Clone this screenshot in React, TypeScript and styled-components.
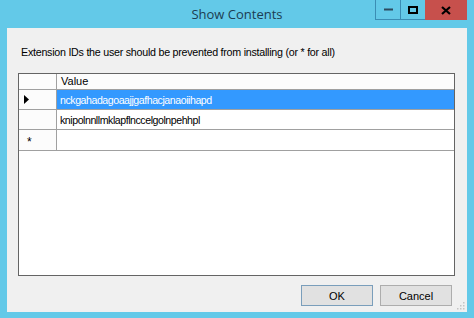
import styled, { createGlobalStyle } from "styled-components";

const GlobalStyle = createGlobalStyle`
    html, body {
        margin: 0;
        padding: 0;
        background: #63c9e8;
    }
`

const rows = [
    { id: 1, text: 'nckgahadagoaajjgafhacjanaoiihapd', current: true },
    { id: 2, text: 'knipolnnllmklapflnccelgolnpehhpl', current: false }
]

const App = () => {
    return (
        <>
            <GlobalStyle />
            <Window>
                <TitleBar>
                    <span />
                    <Title>Show Contents</Title>
                    <Controls>
                        <CtrlButton>
                            <svg width="9" height="3" viewBox="0 0 9 3"><rect width="9" height="2" y="0.5" fill="#2d4a5e" /></svg>
                        </CtrlButton>
                        <CtrlButton>
                            <svg width="10" height="8" viewBox="0 0 10 8"><rect x="1" y="1" width="8" height="6" fill="none" stroke="#000" strokeWidth="2" /></svg>
                        </CtrlButton>
                        <CloseButton>
                            <svg width="10" height="9" viewBox="0 0 10 9"><path d="M1 1 L9 8 M9 1 L1 8" stroke="#000" strokeWidth="2.2" /></svg>
                        </CloseButton>
                    </Controls>
                </TitleBar>
                <Client>
                    <Label>Extension IDs the user should be prevented from installing (or * for all)</Label>
                    <Table>
                        <HeaderCell />
                        <HeaderCell $value>Value</HeaderCell>
                        {rows.map((row) => (
                            <Row key={row.id}>
                                <RowHeader>
                                    {row.current && (
                                        <svg width="5" height="9" viewBox="0 0 5 9"><path d="M0 0 L5 4.5 L0 9 Z" fill="#000" /></svg>
                                    )}
                                </RowHeader>
                                <Cell $selected={row.current}>{row.text}</Cell>
                            </Row>
                        ))}
                        <Row>
                            <RowHeader>
                                <Star>*</Star>
                            </RowHeader>
                            <Cell />
                        </Row>
                        <Empty />
                    </Table>
                    <Footer>
                        <DialogButton $default>OK</DialogButton>
                        <DialogButton>Cancel</DialogButton>
                    </Footer>
                    <Grip>
                        <svg width="8" height="8" viewBox="0 0 8 8">
                            {[[6, 0], [6, 3], [3, 3], [6, 6], [3, 6], [0, 6]].map(([x, y], i) => (
                                <rect key={i} x={x} y={y} width="1.5" height="1.5" fill="#c4c4c4" />
                            ))}
                        </svg>
                    </Grip>
                </Client>
            </Window>
        </>
    )
}

export default App;

const Window = styled.div`
    width: 474px;
    height: 318px;
    background: #63c9e8;
    display: flex;
    flex-direction: column;
    box-sizing: border-box;
    padding: 0 7px 6px 7px;
`

const TitleBar = styled.div`
    height: 28px;
    flex: none;
    display: grid;
    grid-template-columns: 1fr auto 1fr;
    align-items: start;
`

const Title = styled.div`
    font-family: "Open Sans", "Noto Sans", sans-serif;
    font-size: 13px;
    color: #1c3d52;
    line-height: 28px;
`

const Controls = styled.div`
    justify-self: end;
    display: flex;
    height: 20px;
`

const CtrlButton = styled.div`
    width: 25px;
    height: 20px;
    box-sizing: border-box;
    border: 1px solid #3b8db4;
    border-top: 0;
    border-right: 0;
    display: flex;
    align-items: center;
    justify-content: center;
`

const CloseButton = styled.div`
    width: 42px;
    height: 20px;
    background: #c7504c;
    display: flex;
    align-items: center;
    justify-content: center;
`

const Client = styled.div`
    flex: 1;
    background: #f0f0f0;
    display: flex;
    flex-direction: column;
    padding: 18px 12px 0 11px;
    position: relative;
`

const Label = styled.div`
    font-family: "Liberation Sans", Arial, sans-serif;
    font-size: 10.7px;
    line-height: 13px;
    color: #000;
    padding-left: 3px;
    letter-spacing: -0.25px;
`

const Table = styled.div`
    margin-top: 14px;
    height: 203px;
    box-sizing: border-box;
    border: 1px solid #646464;
    background: #fff;
    display: grid;
    grid-template-columns: 38px 1fr;
    grid-template-rows: 16px 20px 20px 21px 1fr;
    font-family: "Liberation Sans", Arial, sans-serif;
    font-size: 11px;
    color: #000;
`

const HeaderCell = styled.div<{ $value?: boolean }>`
    background: #fcfcfc;
    border-bottom: 1px solid #a0a0a0;
    border-right: ${(p) => (p.$value ? "0" : "1px solid #a0a0a0")};
    padding-left: 4px;
    line-height: 15px;
`

const Row = styled.div`
    display: contents;
`

const RowHeader = styled.div`
    background: #fcfcfc;
    border-right: 1px solid #a0a0a0;
    border-bottom: 1px solid #a0a0a0;
    display: flex;
    align-items: center;
    padding-left: 5px;
`

const Star = styled.span`
    font-size: 12px;
    line-height: 1;
    padding-left: 3px;
    padding-top: 3px;
`

const Cell = styled.div<{ $selected?: boolean }>`
    background: ${(p) => (p.$selected ? "#3399ff" : "#fff")};
    color: ${(p) => (p.$selected ? "#fff" : "#000")};
    border-bottom: 1px solid #a0a0a0;
    padding-left: 3px;
    display: flex;
    align-items: center;
    font-size: 10.6px;
    letter-spacing: -0.45px;
`

const Empty = styled.div`
    grid-column: 1 / span 2;
`

const Footer = styled.div`
    display: flex;
    justify-content: flex-end;
    gap: 7px;
    margin-top: 9px;
    padding-right: 3px;
`

const DialogButton = styled.button<{ $default?: boolean }>`
    width: 72px;
    height: 21px;
    box-sizing: border-box;
    background: #e1e1e1;
    border: 1px solid ${(p) => (p.$default ? "#7a9ebb" : "#adadad")};
    font-family: "Liberation Sans", Arial, sans-serif;
    font-size: 11px;
    color: #000;
    padding: 0;
`

const Grip = styled.div`
    position: absolute;
    right: 2px;
    bottom: 2px;
    line-height: 0;
`
